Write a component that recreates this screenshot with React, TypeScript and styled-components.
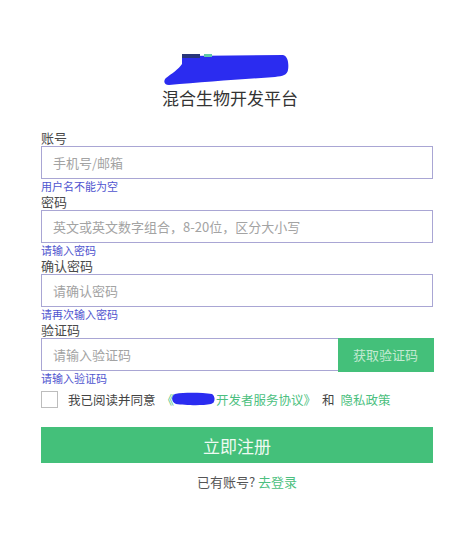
import React from "react";
import styled, { createGlobalStyle } from "styled-components";

const Global = createGlobalStyle`
  html, body { margin: 0; padding: 0; background: #fff; }
  body { font-family: "Noto Sans CJK SC", "Noto Sans", sans-serif; color: #333; }
  * { box-sizing: border-box; }
`;

const Page = styled.div`
  width: 474px;
  height: 540px;
  padding: 52px 41px 0 41px;
  display: flex;
  flex-direction: column;
`;

const Header = styled.div`
  display: flex;
  flex-direction: column;
  align-items: flex-start;
`;

const Logo = styled.svg`
  display: block;
  margin-left: 122px;
`;

const Title = styled.div`
  font-size: 17px;
  line-height: 22px;
  color: #333;
  margin-left: 121px;
`;

const Form = styled.div`
  margin-top: 20px;
  display: flex;
  flex-direction: column;
`;

const Label = styled.div`
  font-size: 13px;
  line-height: 17px;
  color: #4a4a4a;
`;

const Field = styled.div`
  display: flex;
  height: 33px;
  border: 1.5px solid #a9a6d4;
`;

const Input = styled.input`
  flex: 1;
  min-width: 0;
  border: none;
  outline: none;
  padding: 0 11px;
  font-family: inherit;
  font-size: 13px;
  color: #333;
  background: #fff;
  &::placeholder { color: #a3a3a3; }
`;

const CodeButton = styled.button`
  width: 96px;
  margin: -1.5px -1.5px -1.5px 0;
  border: none;
  background: #44c07a;
  color: #c3ead2;
  font-family: inherit;
  font-size: 13px;
`;

const Hint = styled.div`
  font-size: 11px;
  line-height: 14px;
  color: #4f55cf;
`;

const AgreeRow = styled.div`
  display: flex;
  align-items: center;
  margin-top: 3px;
  height: 22px;
  font-size: 12.5px;
  color: #444;
`;

const Check = styled.span`
  width: 17px;
  height: 17px;
  border: 1px solid #bdbdbd;
  margin-right: 9px;
  background: #fff;
`;

const Link = styled.span`
  color: #4cbf80;
`;

const Gap = styled.span<{ w: number }>`
  display: inline-block;
  width: ${(p) => p.w}px;
`;

const Scribble = styled.svg`
  display: block;
  margin: 0 1px 0 -3px;
`;

const Submit = styled.button`
  margin-top: 17px;
  height: 36px;
  width: 100%;
  border: none;
  background: #44c07a;
  color: #eefaf2;
  font-family: inherit;
  font-size: 17px;
`;

const Footer = styled.div`
  margin-top: 10px;
  text-align: center;
  font-size: 13px;
  line-height: 18px;
  color: #555;
  padding-left: 20px;
`;

const groups = [
  { label: "账号", ph: "手机号/邮箱", hint: "用户名不能为空" },
  { label: "密码", ph: "英文或英文数字组合，8-20位，区分大小写", hint: "请输入密码" },
  { label: "确认密码", ph: "请确认密码", hint: "请再次输入密码" },
];

export default function App() {
  return (
    <>
      <Global />
      <Page>
        <Header>
          <Logo width="126" height="35" viewBox="0 0 126 35">
            <path
              d="M19 4 L120 3 C125 4 126 12 125 18 C124 23 120 24 112 25 C80 27 40 30 6 33 C1 33 0 29 3 26 C8 22 16 17 19 12 Z"
              fill="#2b2cf0"
            />
            <rect x="19" y="2" width="18" height="4" fill="#28357a" />
            <rect x="41" y="2" width="8" height="3" fill="#5fc8a8" />
          </Logo>
          <Title>混合生物开发平台</Title>
        </Header>
        <Form>
          {groups.map((g) => (
            <React.Fragment key={g.label}>
              <Label>{g.label}</Label>
              <Field>
                <Input placeholder={g.ph} />
              </Field>
              <Hint>{g.hint}</Hint>
            </React.Fragment>
          ))}
          <Label>验证码</Label>
          <Field>
            <Input placeholder="请输入验证码" />
            <CodeButton>获取验证码</CodeButton>
          </Field>
          <Hint>请输入验证码</Hint>
          <AgreeRow>
            <Check />
            <Gap w={1} />
            我已阅读并同意
            <Gap w={6} />
            <Link>《</Link>
            <Scribble width="44" height="14" viewBox="0 0 44 14">
              <path d="M4 2 C16 0 32 1 41 2 C45 5 44 11 40 12 C30 14 13 13 5 12 C0 10 0 4 4 2 Z" fill="#2b2cf0" />
            </Scribble>
            <Link>开发者服务协议》</Link>
            <Gap w={6} />
            和
            <Gap w={6} />
            <Link>隐私政策</Link>
          </AgreeRow>
          <Submit>立即注册</Submit>
          <Footer>
            已有账号? <Link>去登录</Link>
          </Footer>
        </Form>
      </Page>
    </>
  );
}
